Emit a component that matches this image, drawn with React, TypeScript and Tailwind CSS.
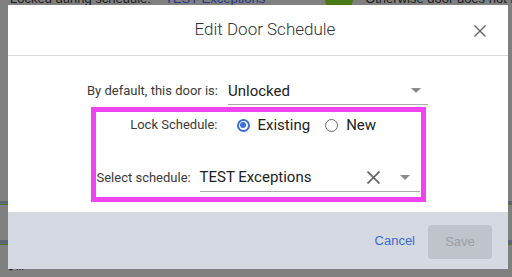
import React from 'react';

const font = { fontFamily: 'Roboto, "Noto Sans", sans-serif' };

function Caret() {
  return (
    <svg width="10" height="5" viewBox="0 0 10 5" className="shrink-0">
      <polygon points="0,0 10,0 5,5" fill="#8a8a8a" />
    </svg>
  );
}

function Cross({ size, color, stroke }: { size: number; color: string; stroke: number }) {
  return (
    <svg width={size} height={size} viewBox="0 0 12 12" className="shrink-0">
      <path d="M1 1 L11 11 M11 1 L1 11" stroke={color} strokeWidth={stroke} strokeLinecap="square" />
    </svg>
  );
}

function Radio({ checked, label }: { checked: boolean; label: string }) {
  return (
    <label className="flex items-center gap-[8px]">
      {checked ? (
        <span className="w-[13px] h-[13px] rounded-full border-2 border-[#3b6fd6] flex items-center justify-center">
          <span className="w-[6px] h-[6px] rounded-full bg-[#3b6fd6]" />
        </span>
      ) : (
        <span className="w-[13px] h-[13px] rounded-full border-[1.5px] border-[#6a6a6a]" />
      )}
      <span className="text-[15px] text-[#222]">{label}</span>
    </label>
  );
}

export default function App() {
  return (
    <div className="relative w-[512px] h-[277px] overflow-hidden bg-[#808080]" style={font}>
      {/* page behind the overlay */}
      <div className="flex flex-col h-full">
        <div className="flex items-center h-[14px] -mt-[8px] text-[13px] whitespace-nowrap" style={{ fontFamily: '"Liberation Sans", Arial, sans-serif' }}>
          <span className="ml-[10px] text-[#1c1c1c]">Locked during schedule:</span>
          <span className="ml-[14px] text-[#23388a]">TEST Exceptions</span>
          <span className="ml-[60px] w-[28px] h-[28px] rounded-full bg-[#4a7a16] shrink-0" />
          <span className="ml-[12px] text-[#1c1c1c]">Otherwise door does not requ</span>
        </div>
        <div className="mt-[195px] h-[4px] bg-[#5d6670] border-b border-[#4d7a1e]" />
        <div className="mt-[35px] h-[5px] bg-[#5d6670] border-b border-[#4d7a1e]" />
        <div className="mt-[14px] ml-[8px] text-[10px] text-[#222]">$ ...</div>
      </div>

      {/* modal */}
      <div className="absolute left-[8px] top-[5px] w-[500px] h-[264px] bg-white flex flex-col">
        <div className="relative h-[51px] flex items-center justify-center border-b border-[#dcdcdc] shrink-0">
          <span className="text-[17px] font-light text-[#333] pl-[14px]">Edit Door Schedule</span>
          <span className="absolute right-[22px] top-[20px]">
            <Cross size={12} color="#666" stroke={1.4} />
          </span>
        </div>

        <div className="flex-1 flex flex-col items-center">
          <div className="mt-[20px] flex items-center h-[29px] w-[341px] ml-[-1px]">
            <span className="w-[130px] text-right text-[13px] text-[#3a3a3a] shrink-0 whitespace-nowrap">By default, this door is:</span>
            <div className="ml-[11px] w-[200px] h-full flex items-center border-b border-[#a8a8a8]">
              <span className="flex-1 text-[15px] text-[#222] pt-[2px]">Unlocked</span>
              <span className="mr-[7px]"><Caret /></span>
            </div>
          </div>

          <div className="mt-[2px] w-[335px] h-[95px] border-[5px] border-[#f043f2] flex flex-col">
            <div className="h-[26px] flex items-center">
              <span className="w-[122px] text-right text-[13px] text-[#3a3a3a] shrink-0 whitespace-nowrap">Lock Schedule:</span>
              <div className="ml-[19px] flex items-center gap-[15px]">
                <Radio checked label="Existing" />
                <Radio checked={false} label="New" />
              </div>
            </div>
            <div className="mt-[25px] h-[29px] flex items-center pl-[1px]">
              <span className="w-[93px] text-[13px] text-[#3a3a3a] shrink-0 whitespace-nowrap">Select schedule:</span>
              <div className="ml-[10px] w-[220px] h-full flex items-center border-b border-[#a8a8a8]">
                <span className="flex-1 text-[15px] text-[#222]">TEST Exceptions</span>
                <span className="mr-[20px]"><Cross size={13} color="#666" stroke={1.5} /></span>
                <span className="mr-[10px]"><Caret /></span>
              </div>
            </div>
          </div>
        </div>

        <div className="h-[57px] shrink-0 bg-[#d5dae2] flex items-center justify-end pr-[16px] gap-[13px]" style={{ fontFamily: '"Liberation Sans", Arial, sans-serif' }}>
          <span className="text-[13px] text-[#3b6ad0]">Cancel</span>
          <button className="w-[64px] h-[34px] rounded-[4px] bg-[#bfc3ca] text-[13px] text-[#9b9fa6] mt-[2px]">Save</button>
        </div>
      </div>
    </div>
  );
}
